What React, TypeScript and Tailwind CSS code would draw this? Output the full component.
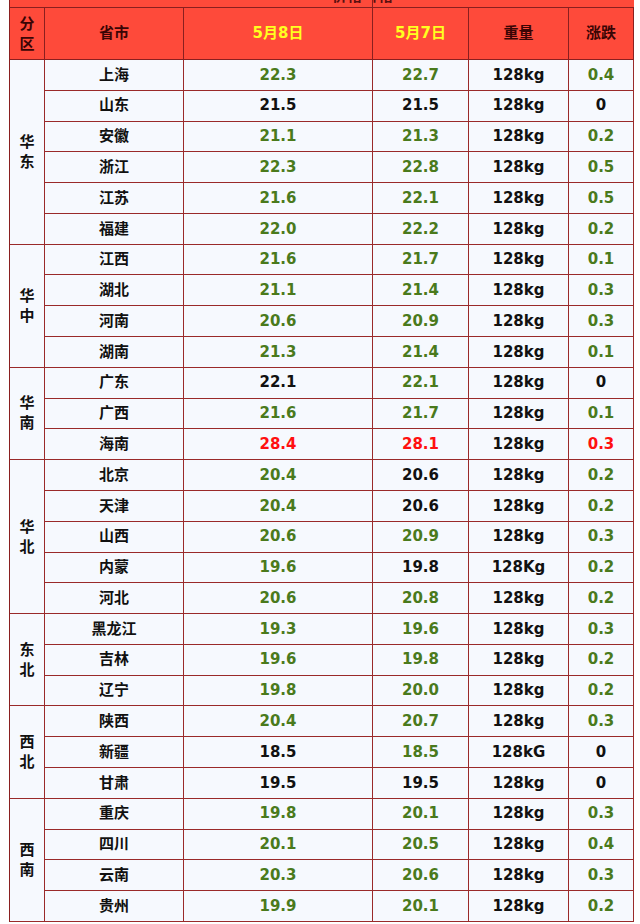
import React from "react";

type Row = {
  p: string;
  a: string;
  ac: string;
  b: string;
  bc: string;
  w: string;
  d: string;
  dc: string;
};

const G = "text-[#4a7a1c]";
const K = "text-[#111111]";
const R = "text-[#ff1010]";

const groups: { name: string[]; span: string; rows: Row[] }[] = [
  {
    name: ["华", "东"],
    span: "row-span-6",
    rows: [
      { p: "上海", a: "22.3", ac: G, b: "22.7", bc: G, w: "128kg", d: "0.4", dc: G },
      { p: "山东", a: "21.5", ac: K, b: "21.5", bc: K, w: "128kg", d: "0", dc: K },
      { p: "安徽", a: "21.1", ac: G, b: "21.3", bc: G, w: "128kg", d: "0.2", dc: G },
      { p: "浙江", a: "22.3", ac: G, b: "22.8", bc: G, w: "128kg", d: "0.5", dc: G },
      { p: "江苏", a: "21.6", ac: G, b: "22.1", bc: G, w: "128kg", d: "0.5", dc: G },
      { p: "福建", a: "22.0", ac: G, b: "22.2", bc: G, w: "128kg", d: "0.2", dc: G },
    ],
  },
  {
    name: ["华", "中"],
    span: "row-span-4",
    rows: [
      { p: "江西", a: "21.6", ac: G, b: "21.7", bc: G, w: "128kg", d: "0.1", dc: G },
      { p: "湖北", a: "21.1", ac: G, b: "21.4", bc: G, w: "128kg", d: "0.3", dc: G },
      { p: "河南", a: "20.6", ac: G, b: "20.9", bc: G, w: "128kg", d: "0.3", dc: G },
      { p: "湖南", a: "21.3", ac: G, b: "21.4", bc: G, w: "128kg", d: "0.1", dc: G },
    ],
  },
  {
    name: ["华", "南"],
    span: "row-span-3",
    rows: [
      { p: "广东", a: "22.1", ac: K, b: "22.1", bc: G, w: "128kg", d: "0", dc: K },
      { p: "广西", a: "21.6", ac: G, b: "21.7", bc: G, w: "128kg", d: "0.1", dc: G },
      { p: "海南", a: "28.4", ac: R, b: "28.1", bc: R, w: "128kg", d: "0.3", dc: R },
    ],
  },
  {
    name: ["华", "北"],
    span: "row-span-5",
    rows: [
      { p: "北京", a: "20.4", ac: G, b: "20.6", bc: K, w: "128kg", d: "0.2", dc: G },
      { p: "天津", a: "20.4", ac: G, b: "20.6", bc: K, w: "128kg", d: "0.2", dc: G },
      { p: "山西", a: "20.6", ac: G, b: "20.9", bc: G, w: "128kg", d: "0.3", dc: G },
      { p: "内蒙", a: "19.6", ac: G, b: "19.8", bc: K, w: "128Kg", d: "0.2", dc: G },
      { p: "河北", a: "20.6", ac: G, b: "20.8", bc: G, w: "128kg", d: "0.2", dc: G },
    ],
  },
  {
    name: ["东", "北"],
    span: "row-span-3",
    rows: [
      { p: "黑龙江", a: "19.3", ac: G, b: "19.6", bc: G, w: "128kg", d: "0.3", dc: G },
      { p: "吉林", a: "19.6", ac: G, b: "19.8", bc: G, w: "128kg", d: "0.2", dc: G },
      { p: "辽宁", a: "19.8", ac: G, b: "20.0", bc: G, w: "128kg", d: "0.2", dc: G },
    ],
  },
  {
    name: ["西", "北"],
    span: "row-span-3",
    rows: [
      { p: "陕西", a: "20.4", ac: G, b: "20.7", bc: G, w: "128kg", d: "0.3", dc: G },
      { p: "新疆", a: "18.5", ac: K, b: "18.5", bc: G, w: "128kG", d: "0", dc: K },
      { p: "甘肃", a: "19.5", ac: K, b: "19.5", bc: K, w: "128kg", d: "0", dc: K },
    ],
  },
  {
    name: ["西", "南"],
    span: "row-span-4",
    rows: [
      { p: "重庆", a: "19.8", ac: G, b: "20.1", bc: G, w: "128kg", d: "0.3", dc: G },
      { p: "四川", a: "20.1", ac: G, b: "20.5", bc: G, w: "128kg", d: "0.4", dc: G },
      { p: "云南", a: "20.3", ac: G, b: "20.6", bc: G, w: "128kg", d: "0.3", dc: G },
      { p: "贵州", a: "19.9", ac: G, b: "20.1", bc: G, w: "128kg", d: "0.2", dc: G },
    ],
  },
];

const font = {
  fontFamily: '"DejaVu Sans", "Noto Sans CJK SC", sans-serif',
};

const cell =
  "flex items-center justify-center border-r border-b border-[#9a2a2a] bg-[#f6f9fe] text-[15px] font-bold";
const hcell =
  "flex items-center justify-center border-r border-b border-[#8a1f1f] bg-[#fe4a3a] text-[15px] font-bold";

export default function App() {
  return (
    <div className="w-[640px] h-[924px] bg-white pl-[9px] overflow-hidden" style={font}>
      <div className="w-[625px] border-l border-[#8a1f1f]">
        <div className="flex h-[8px] bg-[#fe4a3a] border-b border-[#8a1f1f]">
          <div className="w-[363px] border-r border-[#8a1f1f] overflow-hidden flex justify-end">
            <span className="mt-[-14px] mr-[10px] text-[15px] font-bold text-[#5a1010] leading-[20px]">
              价格
            </span>
          </div>
          <div className="flex-1 overflow-hidden">
            <span className="block mt-[-14px] ml-[-10px] text-[15px] font-bold text-[#5a1010] leading-[20px]">
              价格
            </span>
          </div>
        </div>
        <div className="grid grid-cols-[35px_139px_189px_96px_100px_65px] grid-rows-[52px_repeat(28,30.79px)]">
          <div className={`${hcell} flex-col leading-[20px] text-[#3a0505]`}>
            <span>分</span>
            <span>区</span>
          </div>
          <div className={`${hcell} text-[#3a0505]`}>省市</div>
          <div className={`${hcell} text-[#ffff20]`}>5月8日</div>
          <div className={`${hcell} text-[#ffff20]`}>5月7日</div>
          <div className={`${hcell} text-[#3a0505]`}>重量</div>
          <div className={`${hcell} text-[#3a0505]`}>涨跌</div>
          {groups.map((g, gi) => (
            <React.Fragment key={gi}>
              <div className={`${cell} ${g.span} flex-col leading-[20px] text-[#111111]`}>
                <span>{g.name[0]}</span>
                <span>{g.name[1]}</span>
              </div>
              {g.rows.map((r, ri) => (
                <React.Fragment key={ri}>
                  {ri > 0 ? null : null}
                  <div className={`${cell} text-[#111111]`}>{r.p}</div>
                  <div className={`${cell} ${r.ac}`}>{r.a}</div>
                  <div className={`${cell} ${r.bc}`}>{r.b}</div>
                  <div className={`${cell} text-[#111111]`}>{r.w}</div>
                  <div className={`${cell} ${r.dc}`}>{r.d}</div>
                </React.Fragment>
              ))}
            </React.Fragment>
          ))}
        </div>
      </div>
    </div>
  );
}
